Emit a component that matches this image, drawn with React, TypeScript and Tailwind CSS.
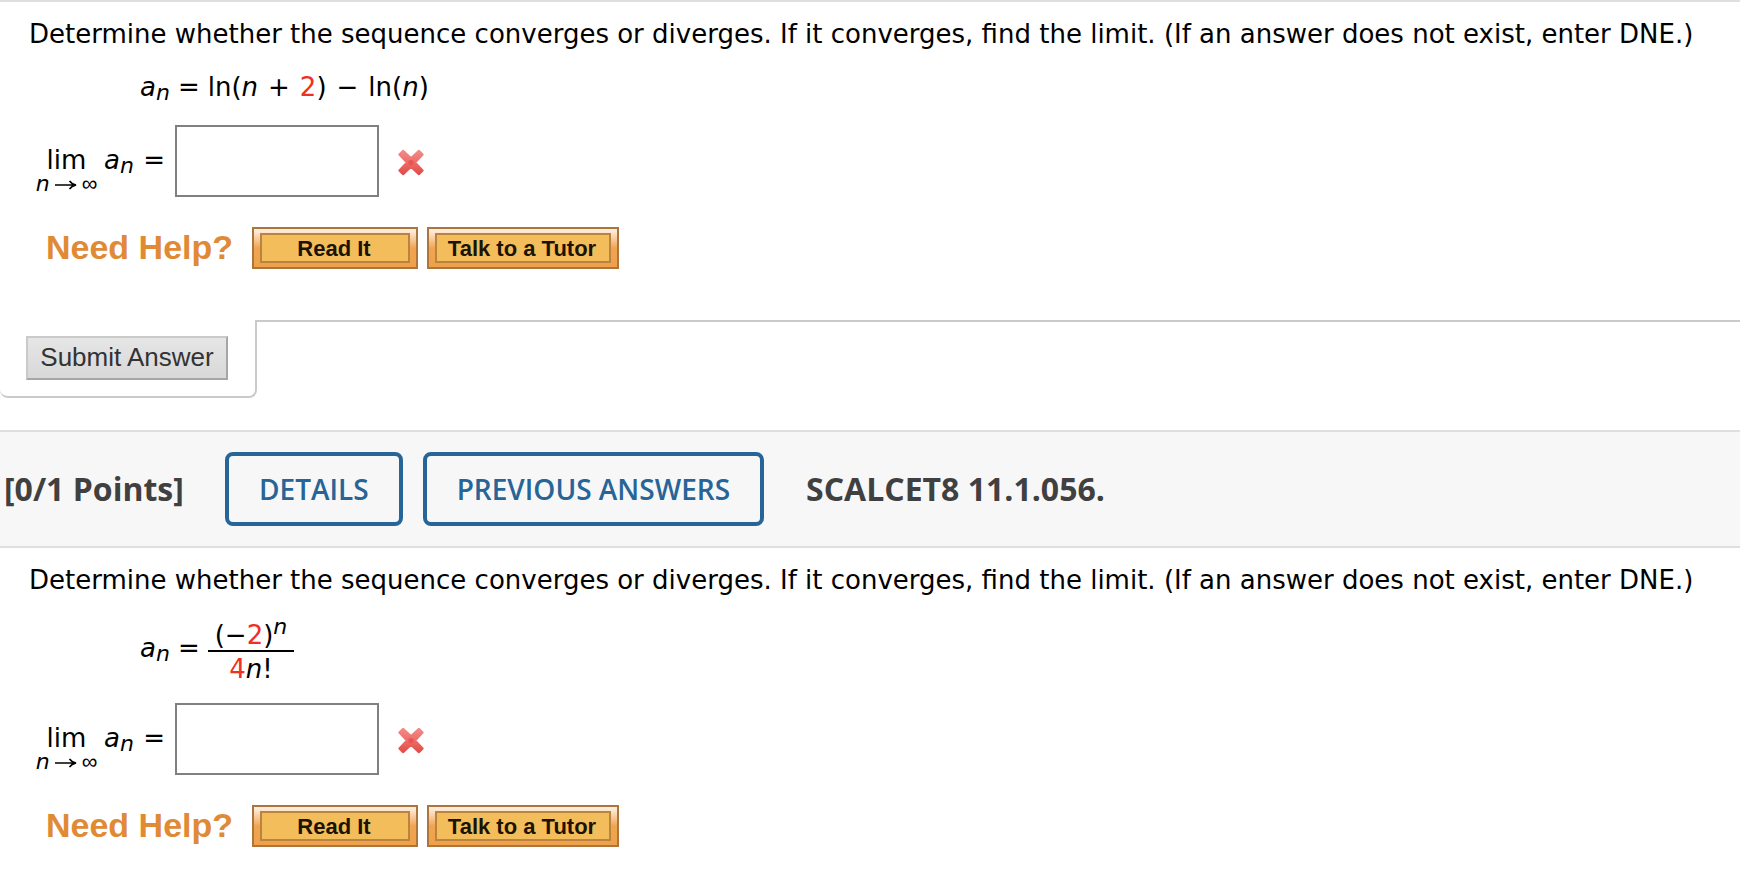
import type { ReactNode } from "react";

function Prompt() {
  return (
    <p className="text-[26px] leading-10">
      Determine whether the sequence converges or diverges. If it converges, find the limit. (If an
      answer does not exist, enter DNE.)
    </p>
  );
}

function Term() {
  return (
    <span className="inline-flex text-[26px] italic">
      a<span className="relative top-[6px] text-[22px]">n</span>
    </span>
  );
}

function Red({ children }: { children: ReactNode }) {
  return <span className="text-[#ee3124]">{children}</span>;
}

function WrongMark() {
  return (
    <svg className="ml-[18px] mt-[23px] h-7 w-7" viewBox="0 0 28 28" role="img" aria-label="Incorrect">
      <defs>
        <linearGradient id="wrong" x1="0" y1="0" x2="0" y2="1">
          <stop offset="0%" stopColor="#f28a88" />
          <stop offset="50%" stopColor="#ee6c69" />
          <stop offset="100%" stopColor="#e14c48" />
        </linearGradient>
      </defs>
      <path
        d="M6 3 L14 10.5 L22 3 L25.5 6.5 L18 14.5 L25.5 22.5 L22 26 L14 18.5 L6 26 L2.5 22.5 L10 14.5 L2.5 6.5 Z"
        fill="url(#wrong)"
        stroke="url(#wrong)"
        strokeWidth="2.4"
        strokeLinejoin="round"
      />
      <circle cx="14" cy="14.5" r="2.6" fill="#ea5450" />
    </svg>
  );
}

function Arrow() {
  return (
    <svg className="h-5 w-[22px]" viewBox="0 0 22 20" fill="none" stroke="currentColor" strokeWidth="1.6" aria-hidden="true">
      <path d="M0 11 H20.5 M14.5 7 Q16.5 10 21 11 Q16.5 12 14.5 15" />
    </svg>
  );
}

function LimitAnswer({ id }: { id: string }) {
  return (
    <div className="flex items-start pl-[7px]">
      <label htmlFor={id} className="flex pt-[21px] text-[26px] leading-7">
        <span className="flex w-[61px] flex-col items-center">
          <span>lim</span>
          <span className="flex gap-[5px] text-[22px] leading-5">
            <i>n</i>
            <Arrow />
            <span className="font-['Liberation_Sans',sans-serif]">∞</span>
          </span>
        </span>
        <span className="ml-[7px] flex w-[61px] justify-between">
          <Term />
          <span>=</span>
        </span>
      </label>
      <input
        id={id}
        type="text"
        className="ml-[10px] h-[72px] w-[204px] border-2 border-[#808080] bg-white px-2 text-[26px] outline-none"
      />
      <WrongMark />
    </div>
  );
}

function HelpButton({ className, children }: { className: string; children: ReactNode }) {
  return (
    <button
      type="button"
      className={`flex h-[42px] border-2 border-[#ab763c] bg-linear-to-b from-[#fdebd9] from-5% via-[#f1a450] via-50% to-[#f0a04a] px-[6px] py-1 ${className}`}
    >
      <span className="flex h-full w-full items-center justify-center border-2 border-[#b98440] bg-[#f4bd5b] pr-[2px] pt-[2px] font-['Liberation_Sans',sans-serif] text-[22px] font-bold leading-6 text-[#1c1400]">
        {children}
      </span>
    </button>
  );
}

function NeedHelp() {
  return (
    <div className="mt-[30px] flex items-center pl-[17px]">
      <span className="w-[206px] pb-[2px] font-['Liberation_Sans',sans-serif] text-[34px] font-bold leading-10 text-[#e08a35]">
        Need Help?
      </span>
      <HelpButton className="w-[166px]">Read It</HelpButton>
      <HelpButton className="ml-[9px] w-[192px]">Talk to a Tutor</HelpButton>
    </div>
  );
}

function HeaderButton({ children }: { children: ReactNode }) {
  return (
    <button
      type="button"
      className="h-[74px] rounded-lg border-4 border-[#276497] px-[30px] text-[28px] font-semibold text-[#276497]"
    >
      {children}
    </button>
  );
}

export default function App() {
  return (
    <main className="min-h-screen overflow-x-hidden bg-white font-['DejaVu_Sans',sans-serif] text-black">
      <section className="border-t-2 border-[#dfdfdf] pl-[29px] pt-3">
        <Prompt />
        <div className="mb-[23px] mt-[18px] flex gap-2 pl-[111px] text-[26px] leading-[30px]">
          <Term />
          <span>=</span>
          <span className="flex gap-[10px]">
            <span>
              ln(<i>n</i>
            </span>
            <span>+</span>
            <span>
              <Red>2</Red>)
            </span>
            <span>−</span>
            <span>
              ln(<i>n</i>)
            </span>
          </span>
        </div>
        <LimitAnswer id="limit-1" />
        <NeedHelp />
      </section>

      <div className="mt-[51px] flex">
        <div className="h-[78px] w-[257px] rounded-b-lg border-b-2 border-r-2 border-[#cacaca] pl-[26px] pt-4">
          <button
            type="submit"
            className="h-11 w-[202px] border-2 border-b-[#a6a6a6] border-l-[#cacaca] border-r-[#a6a6a6] border-t-[#cacaca] bg-linear-to-b from-[#e6e6e6] to-[#d8d8d8] pb-[2px] font-['Liberation_Sans',sans-serif] text-[26px] leading-8 text-[#333]"
          >
            Submit Answer
          </button>
        </div>
        <div className="flex-1 border-t-2 border-[#cacaca]" />
      </div>

      <header className="mt-8 flex h-[118px] items-center border-y-2 border-[#dfdfdf] bg-[#f7f7f7] pl-1 font-['Open_Sans',sans-serif] text-[#404040]">
        <span className="w-[221px] text-[32px] font-bold">[0/1 Points]</span>
        <div className="flex gap-5">
          <HeaderButton>DETAILS</HeaderButton>
          <HeaderButton>PREVIOUS ANSWERS</HeaderButton>
        </div>
        <h2 className="ml-[42px] text-[32px] font-bold">SCALCET8 11.1.056.</h2>
      </header>

      <section className="pl-[29px] pt-3">
        <Prompt />
        <div className="mb-[19px] mt-5 flex items-center gap-2 pl-[111px] text-[26px] leading-[30px]">
          <span className="flex gap-2 pb-2">
            <Term />
            <span>=</span>
          </span>
          <span className="flex flex-col text-center">
            <span className="border-b-2 border-black px-[7px]">
              (−<Red>2</Red>)<i className="relative -top-[10px] inline-block text-[22px] leading-5">n</i>
            </span>
            <span className="pt-[2px]">
              <Red>4</Red>
              <i>n</i>!
            </span>
          </span>
        </div>
        <LimitAnswer id="limit-2" />
        <NeedHelp />
      </section>
    </main>
  );
}
